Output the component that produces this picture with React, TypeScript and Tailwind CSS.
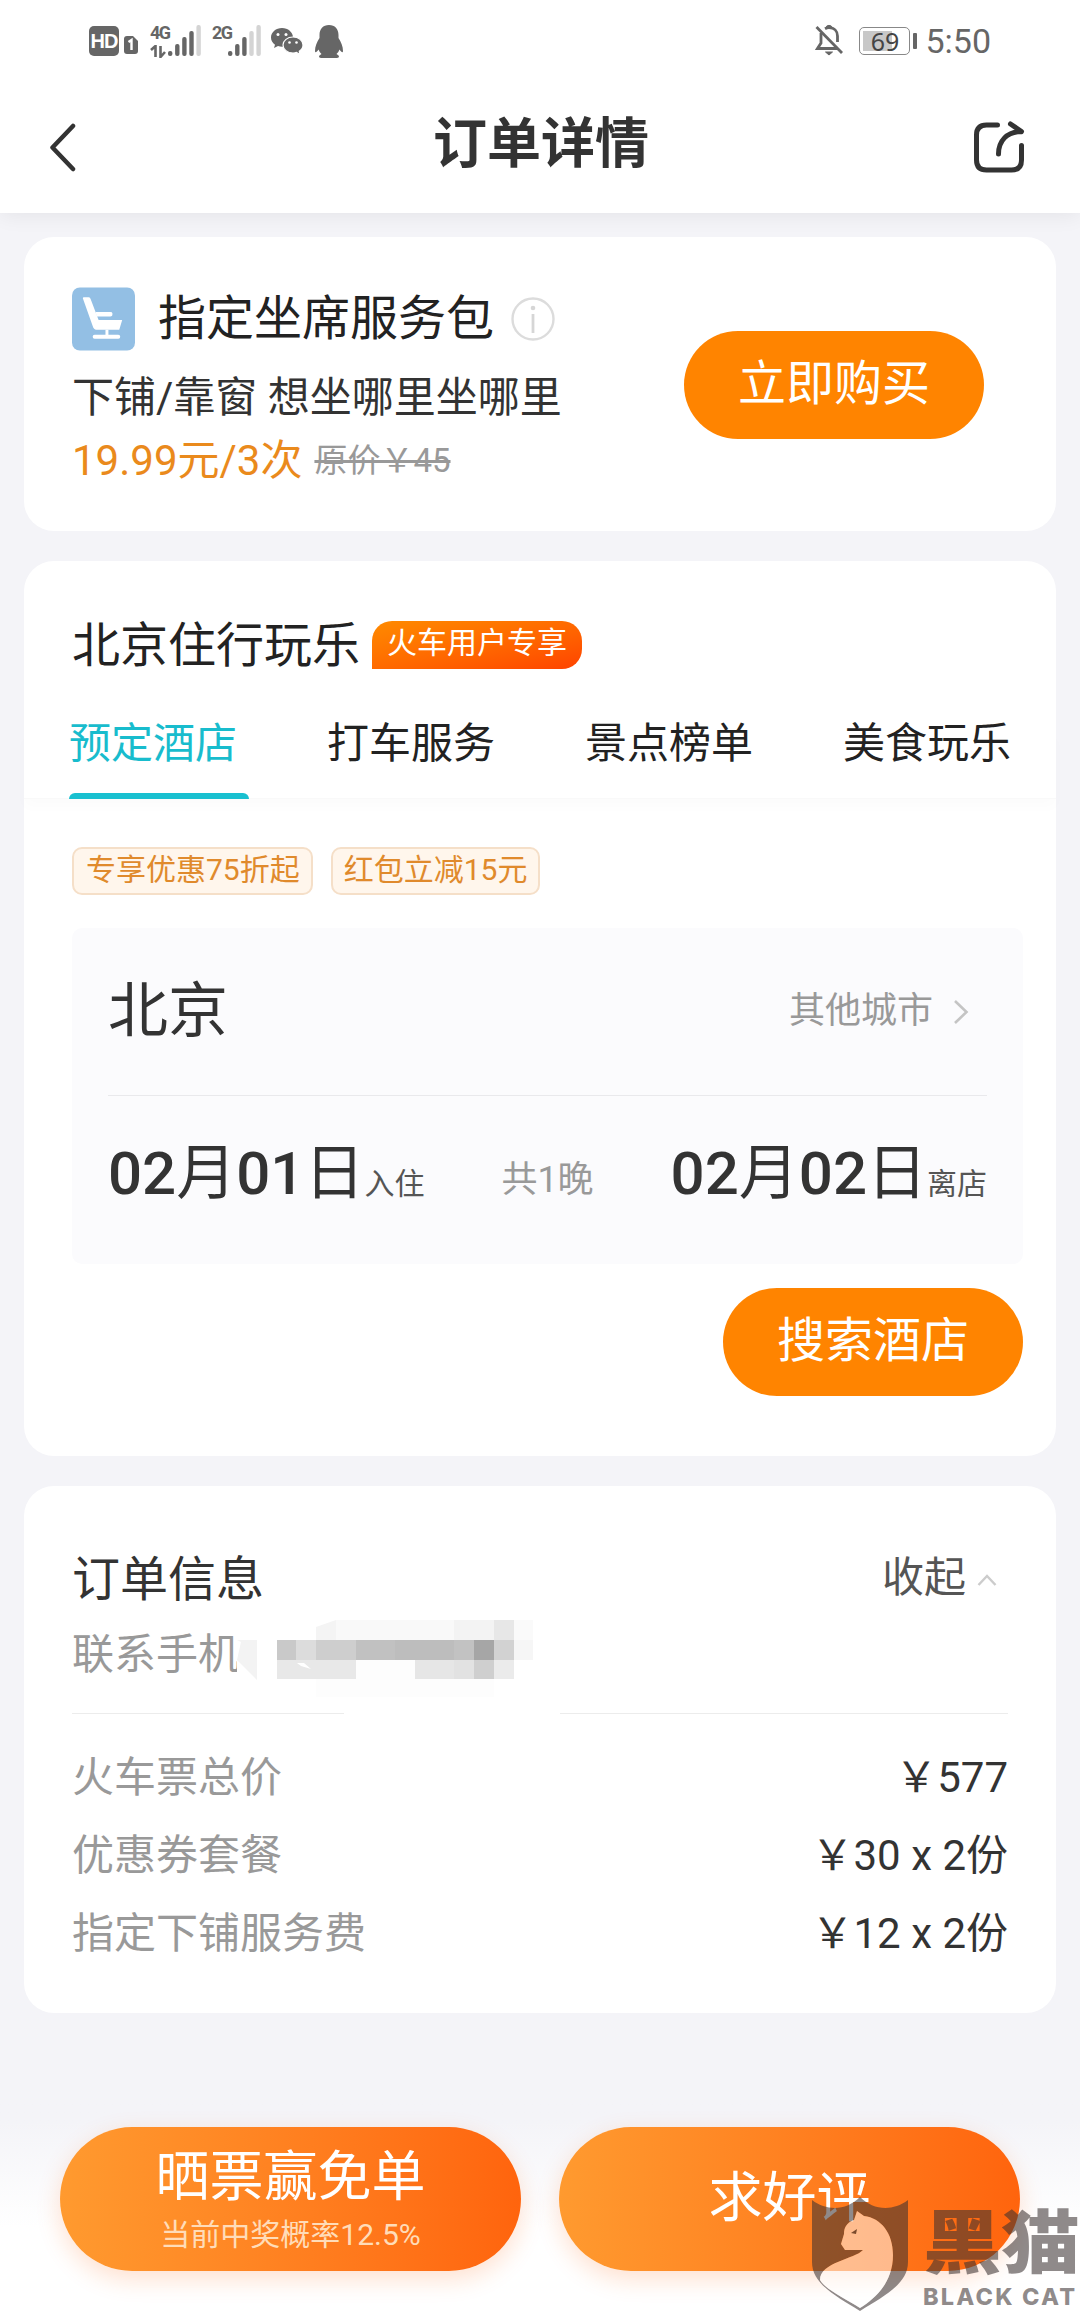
import React, { useState } from 'react';

interface PriceRow {
  label: string;
  value: string;
}

const TABS = ['预定酒店', '打车服务', '景点榜单', '美食玩乐'];

const PRICE_ROWS: PriceRow[] = [
  { label: '火车票总价', value: '￥577' },
  { label: '优惠券套餐', value: '￥30 x 2份' },
  { label: '指定下铺服务费', value: '￥12 x 2份' },
];

// x, y, width, height, fill
const MOSAIC: [number, number, number, number, string][] = [
  [79, 0, 20, 20, '#f4f4f4'],
  [99, 0, 118, 20, '#f9f9f9'],
  [217, 0, 40, 20, '#f3f3f3'],
  [257, 0, 20, 20, '#e7e7e7'],
  [277, 0, 19, 20, '#fafafa'],
  [0, 20, 20, 40, '#f3f3f3'],
  [40, 20, 19, 20, '#c9c9c9'],
  [59, 20, 20, 20, '#dcdcdc'],
  [79, 20, 40, 20, '#cecece'],
  [119, 20, 39, 20, '#c1c1c1'],
  [158, 20, 79, 20, '#bdbdbd'],
  [217, 20, 20, 20, '#c2c2c2'],
  [237, 20, 20, 20, '#a6a6a6'],
  [257, 20, 20, 20, '#d2d2d2'],
  [277, 20, 19, 20, '#f6f6f6'],
  [40, 40, 79, 19, '#e8e8e8'],
  [119, 40, 59, 19, '#fdfdfd'],
  [178, 40, 39, 19, '#e6e6e6'],
  [217, 40, 20, 19, '#e2e2e2'],
  [237, 40, 20, 19, '#cfcfcf'],
  [257, 40, 20, 19, '#ebebeb'],
  [79, 59, 178, 18, '#fdfdfd'],
];

const SignalBars: React.FC<{ active: number }> = ({ active }) => (
  <svg className="w-[33px] h-[32px]" viewBox="0 0 33 32">
    {[5, 12, 19, 25, 31].map((h, i) => (
      <rect key={h} x={i * 7.1} y={31 - h} width="4.4" height={h} rx="2" fill={i < active ? '#666' : '#d4d4d4'} />
    ))}
  </svg>
);

const StatusBar: React.FC = () => (
  <div className="h-[80px] pl-[89px] pr-[89px] flex items-center justify-between text-[#666]">
    <div className="flex items-center h-[34px] mt-[2px]">
      <div className="w-[30px] h-[30px] rounded-[5px] bg-[#666] text-white text-[20px] leading-[30px] font-bold flex justify-center tracking-[-1px] font-['Liberation_Sans']">HD</div>
      <svg className="w-[14px] h-[18px] ml-[5px] mt-[8px]" viewBox="0 0 14 18">
        <path d="M3 0H9L14 5V15Q14 18 11 18H3Q0 18 0 15V3Q0 0 3 0Z" fill="#666" />
        <path d="M4.5 6L7.5 4V14" fill="none" stroke="#fff" strokeWidth="2.4" />
      </svg>
      <div className="w-[18px] h-[32px] ml-[12px]">
        <div className="text-[18px] leading-[15px] font-bold tracking-[-1.5px] font-['Roboto']">4G</div>
        <svg className="w-[16px] h-[13px] mt-[5px]" viewBox="0 0 16 13">
          <path d="M1 5L5.5 1V12M10.5 1V12L15 7" fill="none" stroke="#666" strokeWidth="2.6" />
        </svg>
      </div>
      <SignalBars active={4} />
      <div className="w-[16px] h-[32px] ml-[11px]">
        <div className="text-[18px] leading-[15px] font-bold tracking-[-1.5px] font-['Roboto']">2G</div>
      </div>
      <SignalBars active={3} />
      <svg className="w-[32px] h-[27px] ml-[10px]" viewBox="0 0 32 27">
        <path d="M11 0C5 0 0 4.200 0 9.500C0 12.500 1.500 15 4 16.700L3 20L7 18Q9 18.700 11 18.700C17 18.700 22 14.600 22 9.400S17 0 11 0Z" fill="#666" />
        <path d="M22 9C16.500 9 12 12.600 12 17S16.500 25 22 25Q24 25 25.500 24.400L29 26.500L28.300 23.300C30.500 21.900 32 19.600 32 17C32 12.600 27.500 9 22 9Z" fill="#666" stroke="#fff" strokeWidth="1.2" />
        <circle cx="7" cy="6.500" r="1.500" fill="#fff" />
        <circle cx="15" cy="6.500" r="1.500" fill="#fff" />
        <circle cx="18.500" cy="14.500" r="1.300" fill="#fff" />
        <circle cx="25.500" cy="14.500" r="1.300" fill="#fff" />
      </svg>
      <svg className="w-[28px] h-[33px] ml-[12px]" viewBox="0 0 28 33">
        <path d="M14 0C8 0 4.500 4 4.500 10V13C2 17 0 21 0 26C0 28 1.500 27.500 3.500 24.500Q4.500 27.500 6.500 29Q4 30 4 31.500Q4 33 8 33H20Q24 33 24 31.500Q24 30 21.500 29Q23.500 27.500 24.500 24.500C26.500 27.500 28 28 28 26C28 21 26 17 23.500 13V10C23.500 4 20 0 14 0Z" fill="#666" />
      </svg>
    </div>
    <div className="flex items-center mt-[2px]">
      <svg className="w-[29px] h-[32px] mb-[2px]" viewBox="0 0 29 32">
        <path d="M6 9V19L2.500 24.500H22M10 4.800Q12 3.700 14 3.700C19.500 3.700 22.500 7.500 22.500 12V18" fill="none" stroke="#666" strokeWidth="2.800" />
        <path d="M11 4.500Q11 1.300 14 1.300Q17 1.300 17 4.500M10.500 28H17.500L14 31Z" fill="#666" stroke="#666" />
        <path d="M1.500 3L27 29" stroke="#666" strokeWidth="2.800" />
      </svg>
      <div className="w-[51px] h-[28px] ml-[15px] p-[3px] rounded-[5px] border-[1.500px] border-[#888] relative">
        <div className="w-[29px] h-full bg-[#c8c8c8]"></div>
        <span className="absolute inset-0 text-center text-[25px] leading-[26px] text-[#444] font-['Noto_Sans']">69</span>
      </div>
      <div className="w-[4px] h-[16px] ml-[3px] rounded-[1px] bg-[#666]"></div>
      <span className="ml-[8px] text-[34px] leading-[40px]">5:50</span>
    </div>
  </div>
);

const Header: React.FC = () => (
  <header className="h-[213px] shrink-0 bg-white shadow-[0_2px_20px_rgba(0,0,0,0.07)] relative">
    <StatusBar />
    <div className="h-[133px] pl-[50px] pr-[54px] flex items-center justify-between">
      <svg className="w-[60px] h-[50px]" viewBox="0 0 60 50">
        <path d="M23 4L2.500 25.500L23 47" fill="none" stroke="#333" strokeWidth="4.500" strokeLinecap="round" strokeLinejoin="round" />
      </svg>
      <h1 className="text-[54px] leading-[80px] font-bold text-[#333] mb-[3px]">订单详情</h1>
      <svg className="w-[54px] h-[54px]" viewBox="0 0 54 54">
        <path d="M25.500 5H14.500Q4.500 5 4.500 15V40Q4.500 50 14.500 50H39.500Q49.500 50 49.500 40V25.500" fill="none" stroke="#333" strokeWidth="5" strokeLinecap="round" />
        <path d="M26.500 34C26.500 21 35 11.500 49 11.500M38.500 4L49.500 11.500" fill="none" stroke="#333" strokeWidth="5" strokeLinecap="round" strokeLinejoin="round" />
      </svg>
    </div>
  </header>
);

const SeatPackageCard: React.FC = () => (
  <section className="h-[294px] bg-white rounded-[30px] pl-[48px] pr-[72px] flex justify-between">
    <div className="pt-[50px]">
      <div className="h-[64px] flex items-center">
        <svg className="w-[63px] h-[64px]" viewBox="0 0 64 64">
          <rect width="64" height="64" rx="8" fill="#93bfe4" />
          <path d="M11 11Q11 10 12 10H17Q18.500 10 19 12L27 33H51L48 43H26Q22 43 21 39Z" fill="#fff" />
          <path d="M24 25H39Q41 25 41 26.500V28Q41 29.500 39 29.500H25Z" fill="#fff" />
          <path d="M34 43H37V48H47Q49 48 49 50T47 52H23Q21 52 21 50T23 48H34Z" fill="#fff" />
        </svg>
        <h2 className="ml-[23px] text-[48px] leading-[64px] text-[#222]">指定坐席服务包</h2>
        <svg className="w-[44px] h-[44px] ml-[17px]" viewBox="0 0 44 44">
          <circle cx="22" cy="22" r="20.500" fill="none" stroke="#dcdcdc" strokeWidth="2.400" />
          <circle cx="22" cy="11" r="2.300" fill="#d6d6d6" />
          <path d="M22 17V36" stroke="#d6d6d6" strokeWidth="2.800" />
        </svg>
      </div>
      <p className="mt-[15px] text-[42px] leading-[64px] text-[#333]">下铺/靠窗 想坐哪里坐哪里</p>
      <div className="flex items-center leading-[64px] -mt-px">
        <span className="text-[42px] text-[#ea8a1c]">19.99元/3次</span>
        <span className="ml-[12px] text-[33px] text-[#999] line-through">原价￥45</span>
      </div>
    </div>
    <button type="button" className="w-[300px] h-[108px] mt-[94px] pb-[2px] rounded-full bg-[#ff8400] text-white text-[48px]">立即购买</button>
  </section>
);

const HotelPanel: React.FC = () => (
  <div className="h-[336px] rounded-[10px] bg-[#fbfbfd] px-[36px]">
    <div className="h-[167px] flex items-center justify-between">
      <span className="text-[60px] leading-[80px] text-[#333]">北京</span>
      <div className="flex items-center pr-[18px]">
        <span className="text-[36px] text-[#999] mb-px">其他城市</span>
        <svg className="w-[16px] h-[26px] ml-[20px]" viewBox="0 0 16 26">
          <path d="M2 2L13.500 13L2 24" fill="none" stroke="#c4c4c4" strokeWidth="2.600" />
        </svg>
      </div>
    </div>
    <div className="h-px bg-[#e9e9ec]"></div>
    <div className="h-[166px] flex items-center justify-between">
      <div className="flex items-baseline text-[#333] leading-[80px]">
        <span className="text-[60px]"><b className="font-medium">02</b>月<b className="font-medium">01</b>日</span>
        <span className="text-[30px] text-[#555]">入住</span>
      </div>
      <span className="text-[36px] leading-[50px] mt-[2px] text-[#999]">共1晚</span>
      <div className="flex items-baseline text-[#333] leading-[80px]">
        <span className="text-[60px]"><b className="font-medium">02</b>月<b className="font-medium">02</b>日</span>
        <span className="text-[30px] text-[#555]">离店</span>
      </div>
    </div>
  </div>
);

const TravelCard: React.FC = () => {
  const [activeTab, setActiveTab] = useState(0);

  return (
    <section className="h-[895px] mt-[30px] bg-white rounded-[30px]">
      <div className="h-[170px] pl-[48px] pt-[52px] flex">
        <h2 className="text-[48px] leading-[66px] text-[#222]">北京住行玩乐</h2>
        <span className="h-[48px] mt-[8px] ml-[12px] px-[15px] rounded-[20px] rounded-bl-none bg-linear-to-br from-[#ff8a00] to-[#ff4200] text-white text-[30px] leading-[44px]">火车用户专享</span>
      </div>
      <div className="h-[68px] grid grid-cols-4 shadow-[0_8px_12px_rgba(0,0,0,0.015)] border-b border-[#f9f9f9]">
        {TABS.map((tab, i) => (
          <div key={tab} className="h-[68px] pl-[45px] cursor-pointer" onClick={() => setActiveTab(i)}>
            <div className={`h-[62px] mt-[-18px] text-[42px] leading-[62px] ${activeTab === i ? 'text-[#18bccd]' : 'text-[#222]'}`}>{tab}</div>
            {activeTab === i && <div className="w-[180px] h-[6px] mt-[18px] rounded-t-[6px] bg-[#19c0d0]"></div>}
          </div>
        ))}
      </div>
      <div className="pl-[48px] pr-[33px] pt-[48px]">
        <div className="flex gap-[18px] text-[30px] leading-[42px] text-[#e08a2c]">
          <span className="h-[48px] pl-[12px] pr-[11px] rounded-[10px] border-2 border-[#f5dfc8] bg-[#fff6ec]">专享优惠75折起</span>
          <span className="h-[48px] pl-[11px] pr-[11px] rounded-[10px] border-2 border-[#f5dfc8] bg-[#fff6ec]">红包立减15元</span>
        </div>
        <div className="mt-[33px]">
          <HotelPanel />
        </div>
        <div className="mt-[24px] flex justify-end">
          <button type="button" className="w-[300px] h-[108px] pb-[2px] rounded-full bg-[#ff8400] text-white text-[48px]">搜索酒店</button>
        </div>
      </div>
    </section>
  );
};

const OrderInfoCard: React.FC = () => (
  <section className="h-[527px] mt-[30px] bg-white rounded-[30px] px-[48px] pt-[59px]">
    <div className="h-[70px] flex items-center justify-between">
      <h2 className="text-[48px] leading-[70px] text-[#333]">订单信息</h2>
      <div className="flex items-center pr-[11px] text-[#555]">
        <span className="text-[42px] leading-[64px] mb-[5px]">收起</span>
        <svg className="w-[20px] h-[12px] ml-[11px]" viewBox="0 0 20 12">
          <path d="M1.500 11L10 2L18.500 11" fill="none" stroke="#ccc" strokeWidth="2.400" />
        </svg>
      </div>
    </div>
    <div className="h-[99px] flex border-b border-[#ececec] relative">
      <span className="text-[42px] leading-[79px] text-[#999]">联系手机</span>
      <svg className="w-[300px] h-[80px] ml-[-3px] mt-[5px]" viewBox="0 0 300 80">
        <path d="M0 40Q0 22 24 20H34L84 0H300V80H84L24 60Q2 55 0 40Z" fill="#fff" />
        {MOSAIC.map(([x, y, w, h, fill]) => (
          <rect key={`${x}-${y}`} x={x} y={y} width={w} height={h} fill={fill} />
        ))}
        <path d="M0 20V40L4 22ZM0 40L20 60H0ZM79 0V7L99 0Z" fill="#fff" />
        <path d="M60 43L67 43L74 49L64 46Z" fill="#fff" />
      </svg>
      {/* smudge left over the divider by the censor brush */}
      <div className="absolute left-[272px] bottom-[-2px] w-[216px] h-[4px] bg-white"></div>
    </div>
    <div className="pt-[25px]">
      {PRICE_ROWS.map((row) => (
        <div key={row.label} className="h-[78px] flex items-center justify-between text-[42px] leading-[78px]">
          <span className="text-[#999]">{row.label}</span>
          <span className="text-[#333]">{row.value}</span>
        </div>
      ))}
    </div>
  </section>
);

const BlackCatMark: React.FC = () => (
  <div className="absolute left-[811px] top-[2197px] w-[269px] h-[115px] flex">
    <svg className="w-[98px] h-[115px] shrink-0" viewBox="0 0 98 115">
      <path fillRule="evenodd" d="M1 3C17 15 36 13 49 0C62 13 81 15 97 3V65C97 87 73 99 49 114C25 99 1 87 1 65ZM46 14L43 23C35 26 33 31 33 37L30 47L34 53L52 53C44 62 9 65 9 83C14 92 33 101 49 111C65 101 82 85 82 58C82 36 70 21 53 19Z" fill="#3a3232" fillOpacity="0.570" />
      <path d="M46 14L43 23C35 26 33 31 33 37L30 47L34 53L52 53C44 62 9 65 9 83C14 92 33 101 49 111C65 101 82 85 82 58C82 36 70 21 53 19Z" fill="#fff" fillOpacity="0.500" />
      <path d="M40 36L46 32L45 37Z" fill="#7a4a2c" />
    </svg>
    <div className="ml-[14px] text-[#3a3232]/57">
      <div className="h-[66px] mt-[9px] w-[156px] text-[79px] leading-[64px] tracking-[-1px] font-black font-['Noto_Sans_CJK_SC'] scale-y-88">黑猫</div>
      <div className="mt-[13px] w-[156px] text-[23.500px] leading-[24px] tracking-[2.200px] font-extrabold font-['Inter'] whitespace-nowrap">BLACK CAT</div>
    </div>
  </div>
);

const App: React.FC = () => {
  return (
    <div className="w-[1080px] h-[2312px] overflow-hidden relative flex flex-col bg-[#f4f4f8] font-['Roboto','Noto_Sans_CJK_SC',sans-serif]">
      <Header />
      <main className="px-[24px] pt-[24px]">
        <SeatPackageCard />
        <TravelCard />
        <OrderInfoCard />
      </main>
      <footer className="h-[212px] mt-auto pt-[27px] px-[60px] flex gap-[38px] text-white bg-linear-to-b from-[#f4f4f8] from-10% to-white to-60%">
        <button type="button" className="w-[461px] h-[144px] rounded-full bg-linear-to-r from-[#ff9a2f] to-[#ff640d] shadow-[0_8px_24px_rgba(255,100,13,0.200)]">
          <div className="text-[54px] leading-[62px] mt-[5px]">晒票赢免单</div>
          <div className="text-[30px] leading-[44px] mt-[4px] text-[#ffdcb8]">当前中奖概率12.5%</div>
        </button>
        <button type="button" className="w-[461px] h-[144px] pb-[2px] rounded-full bg-linear-to-r from-[#ff9a2f] to-[#ff640d] shadow-[0_8px_24px_rgba(255,100,13,0.200)] text-[54px]">求好评</button>
      </footer>
      <BlackCatMark />
    </div>
  );
};

export default App;
